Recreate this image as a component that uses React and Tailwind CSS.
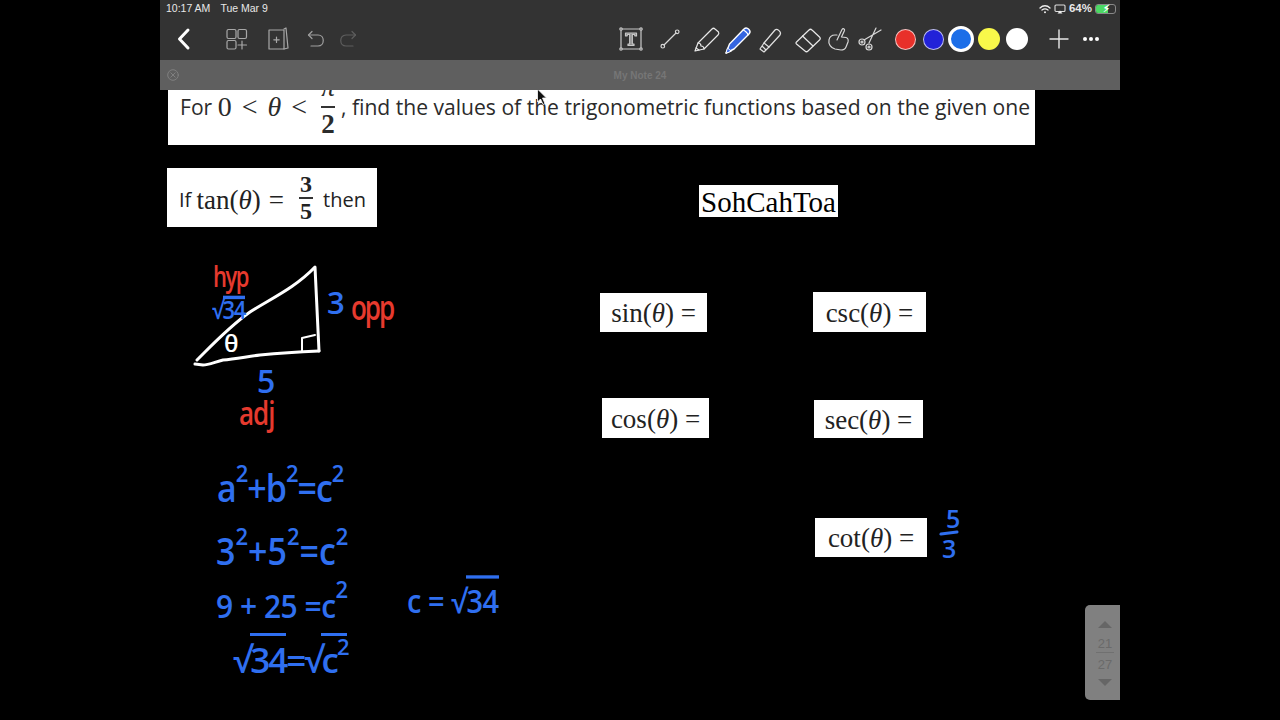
const serif = "font-['Liberation_Serif',serif]";

function Ic({ children, w = 28, h = 28, vb, className = "" }) {
  return (
    <svg width={w} height={h} viewBox={vb || `0 0 ${w} ${h}`} fill="none" strokeLinecap="round" strokeLinejoin="round" className={className}>
      {children}
    </svg>
  );
}

function Dot({ fill, ring = "border border-white/70", size = "w-[21px] h-[21px]" }) {
  return (
    <div className="w-[26px] h-[26px] flex items-center justify-center ml-[2px]">
      <div className={`rounded-full ${size} ${fill} ${ring}`} />
    </div>
  );
}

function Left() {
  return (
    <div className="flex items-center pl-3">
      <Ic w={24} h={28}>
        <path d="M16 5 L7.5 14 L16 23" stroke="#fff" strokeWidth="3" />
      </Ic>
      <Ic w={24} h={24} className="ml-[28px]">
        <g stroke="#a8a8a8" strokeWidth="1.2">
          <rect x="3" y="2.5" width="9" height="9" rx="1.5" />
          <rect x="14" y="2.5" width="8.5" height="9" rx="1.5" />
          <rect x="3" y="13.5" width="9" height="8.5" rx="1.5" />
          <path d="M18 14 V22 M14 18 H22.5" />
        </g>
      </Ic>
      <Ic w={24} h={26} className="ml-[18px]">
        <g stroke="#a8a8a8" strokeWidth="1.2">
          <rect x="3" y="4" width="15" height="19" />
          <path d="M18 3 L20 2 L22 22 L18 23" />
          <path d="M10.5 11 V16.5 M7.8 13.8 H13.2" />
        </g>
      </Ic>
      <Ic w={20} h={20} className="ml-[16px]">
        <g stroke="#a0a0a0" strokeWidth="1.2">
          <path d="M2.5 6 H12 C19 6 19 17 12 17 H5" />
          <path d="M6 2.5 L2.5 6 L6 9.5" />
        </g>
      </Ic>
      <Ic w={20} h={20} className="ml-[12px]">
        <g stroke="#5e5e5e" strokeWidth="1.2">
          <path d="M17.5 6 H8 C1 6 1 17 8 17 H15" />
          <path d="M14 2.5 L17.5 6 L14 9.5" />
        </g>
      </Ic>
    </div>
  );
}

function Right() {
  return (
    <div className="flex items-center pr-[15px]">
      <Ic>
        <g stroke="#c8c8c8" strokeWidth="1.2">
          <rect x="4" y="4" width="20" height="20" />
          <circle cx="4" cy="4" r="1.2" fill="#333" />
          <circle cx="24" cy="4" r="1.2" fill="#333" />
          <circle cx="4" cy="24" r="1.2" fill="#333" />
          <circle cx="24" cy="24" r="1.2" fill="#333" />
          <path d="M8.5 8 H19.5 V11 H18 L17.5 9.5 H15.3 V19 H17 V20.5 H11 V19 H12.7 V9.5 H10.5 L10 11 H8.5 Z" fill="#888" />
        </g>
      </Ic>
      <Ic className="ml-[11px]">
        <g stroke="#d8d8d8" strokeWidth="1.2">
          <path d="M8 20 L20 8" />
          <circle cx="6.8" cy="21.2" r="1.8" />
          <circle cx="21.2" cy="6.8" r="1.8" />
        </g>
      </Ic>
      <Ic className="ml-[9px]">
        <g stroke="#e8e8e8" strokeWidth="1.2">
          <path d="M2 26 L5 18 L19 4 C20 3 21 3 22 4 L25.5 7 C26 8 26 9 25 10 L11 24 Z" />
          <path d="M5 18 C7 18 8 19 8 21 C10 21 11 22 11 24 M3 23 L6 25" />
        </g>
      </Ic>
      <Ic w={30} h={30} className="ml-[2px] -mr-[1px]">
        <path d="M3 29 L6.5 20 L21 5 C24 2 29 7 26 10 L11 25 Z" fill="#3565e0" stroke="#fff" strokeWidth="1.4" />
        <path d="M20 6 C21 6 25 9 25 11" stroke="#fff" strokeWidth="1.2" />
        <path d="M3 29 L4.5 24 L8 27 Z" fill="#3565e0" stroke="#fff" strokeWidth="1" />
      </Ic>
      <Ic className="ml-[4px]">
        <g stroke="#e0e0e0" strokeWidth="1.2">
          <path d="M8 18 L19 5 C21 3 26 7 24 10 L13 22 Z" />
          <path d="M8 18 L6 21 L10 25 L13 22 M4 24 L8 27 L10 25 L6 21 Z" />
        </g>
      </Ic>
      <Ic className="ml-[10px]">
        <g stroke="#e8e8e8" strokeWidth="1.2">
          <path d="M2.5 17 L15 5 C16 4 17 4 18 5 L25.5 12 C26.5 13 26.5 14 25.5 15 L14 26 C13 27 12 27 11 26 L2.5 19 C2 18.5 2 17.5 2.5 17 Z" />
          <path d="M8.5 11 L19 21" />
        </g>
      </Ic>
      <Ic className="ml-[2px]">
        <g stroke="#d8d8d8" strokeWidth="1.2">
          <path d="M13 15 L18 4.5 C19 3 21 4 20.5 5.5 L17.5 12 L22 12.5 C24 13 24.5 15 24 17 L22 22 C21 24.5 19 25 17 25 L11 24 C7 23 4 19 5 15 C5.5 12 8 10 11 10 L13 10" />
        </g>
      </Ic>
      <Ic className="ml-[4px]">
        <g stroke="#d8d8d8" strokeWidth="1.2">
          <path d="M25 5 L8 15 M20 3 L13 18" />
          <circle cx="6" cy="17" r="3" />
          <circle cx="13" cy="22" r="3" />
          <circle cx="6" cy="17" r="1" />
          <circle cx="13" cy="22" r="1" />
        </g>
      </Ic>
      <div className="ml-[6px]">
        <Dot fill="bg-[#e8302a]" />
      </div>
      <Dot fill="bg-[#2222d8]" />
      <Dot fill="bg-[#1c6ee8]" ring="border-[3px] border-white" size="w-[26px] h-[26px]" />
      <Dot fill="bg-[#f8f84a]" ring="" size="w-[22px] h-[22px]" />
      <Dot fill="bg-white" ring="" size="w-[22px] h-[22px]" />
      <Ic className="ml-[15px]">
        <path d="M14 5 V23 M5 14 H23" stroke="#e8e8e8" strokeWidth="1.4" />
      </Ic>
      <div className="ml-[4px] w-7 flex justify-center gap-[2px]">
        <div className="w-[4px] h-[4px] rounded-full bg-white" />
        <div className="w-[4px] h-[4px] rounded-full bg-white" />
        <div className="w-[4px] h-[4px] rounded-full bg-white" />
      </div>
    </div>
  );
}

function Status() {
  return (
    <div className="h-[18px] flex items-center justify-between pl-[6px] pr-[4px] text-[10.5px] text-[#e8e8e8] font-['Liberation_Sans',sans-serif]">
      <div className="flex gap-[10px]">
        <span>10:17 AM</span>
        <span>Tue Mar 9</span>
      </div>
      <div className="flex items-center">
        <Ic w={12} h={10}>
          <path d="M1 4 C4 1 8 1 11 4 M3 6 C5 4.5 7 4.5 9 6" stroke="#eee" strokeWidth="1.3" />
          <circle cx="6" cy="8.2" r="1" fill="#eee" />
        </Ic>
        <Ic w={12} h={10} className="ml-[3px]">
          <rect x="1" y="1" width="10" height="6.5" rx="1" stroke="#ddd" strokeWidth="1.1" />
          <path d="M3.5 9.5 L6 6.5 L8.5 9.5 Z" fill="#eee" />
        </Ic>
        <span className="ml-[3px] text-[11.5px] font-bold">64%</span>
        <div className="ml-[3px] relative w-[21px] h-[10px] border border-[#888] rounded-[3px]">
          <div className="h-full w-[12px] bg-[#4cd964] rounded-l-[2px]" />
          <span className="absolute left-[7px] -top-[2px] text-[10px] leading-[12px] text-white font-bold">⚡︎</span>
        </div>
      </div>
    </div>
  );
}

function MathBox({ className, children }) {
  return (
    <div className={`absolute bg-white text-[#222] flex items-center justify-center whitespace-pre ${serif} ${className}`}>
      {children}
    </div>
  );
}

const T = () => <i>θ</i>;

function Ink({ className, children }) {
  return (
    <div className={`absolute whitespace-pre leading-none font-['Open_Sans',sans-serif] font-semibold origin-bottom-left ${className}`}>
      {children}
    </div>
  );
}

function Sup({ children }) {
  return <span className="text-[22px] relative -top-[18px]">{children}</span>;
}

function Root({ children }) {
  return <span className="border-t-[3px] border-[#2f6ff0]">{children}</span>;
}

function Canvas() {
  return (
    <div className="relative flex-1 bg-black overflow-hidden">
      {/* instruction strip */}
      <div className="absolute left-[8px] top-0 w-[867px] h-[55px] bg-white overflow-hidden text-[#2b2b2b] pl-[12px]">
        <div className="h-[34px] flex items-center whitespace-pre text-[21.1px] font-['Open_Sans',sans-serif]">
          <span>For </span>
          <span className={`${serif} text-[28px] [word-spacing:3px]`}>0 &lt; <T /> &lt;</span>
          <span className={`${serif} ml-[14px] text-[27px] flex flex-col items-center font-bold`}>
            <span className="h-[24px] leading-[10px] font-normal italic">π</span>
            <span className="w-[14px] h-[2px] bg-[#333]" />
            <span className="h-[24px] leading-[32px]">2</span>
          </span>
          <span className="ml-[6px]">, find the values of the trigonometric functions based on the given one</span>
        </div>
      </div>

      <MathBox className="left-[7px] top-[78px] w-[210px] h-[59px] text-[27px] justify-start pl-[12px]">
        <span className="font-['Open_Sans',sans-serif] text-[20px] mt-[5px]">If </span>
        <span className="mt-[5px]">tan(<T />)</span>
        <span className="ml-[8px] mt-[5px]">=</span>
        <span className="ml-[15px] text-[24px] flex flex-col items-center font-bold">
          <span className="h-[25px] leading-[25px]">3</span>
          <span className="w-[14px] h-[2px] bg-[#333]" />
          <span className="h-[25px] leading-[25px]">5</span>
        </span>
        <span className="ml-[10px] mt-[5px] font-['Open_Sans',sans-serif] text-[20px]">then</span>
      </MathBox>

      <MathBox className="left-[539px] top-[95px] w-[139px] h-[32px] text-[29px] text-black pt-[3px]">SohCahToa</MathBox>
      <MathBox className="left-[440px] top-[203px] w-[107px] h-[39px] text-[27px] pt-[2px]">sin(<T />) =</MathBox>
      <MathBox className="left-[653px] top-[202px] w-[113px] h-[40px] text-[27px] pt-[2px]">csc(<T />) =</MathBox>
      <MathBox className="left-[442px] top-[308px] w-[107px] h-[40px] text-[27px] pt-[2px]">cos(<T />) =</MathBox>
      <MathBox className="left-[654px] top-[310px] w-[109px] h-[38px] text-[27px] pt-[2px]">sec(<T />) =</MathBox>
      <MathBox className="left-[655px] top-[428px] w-[112px] h-[39px] text-[27px] pt-[2px]">cot(<T />) =</MathBox>

      {/* triangle */}
      <svg width="160" height="120" viewBox="0 0 160 120" fill="none" className="absolute left-[30px] top-[170px]" strokeLinecap="round" strokeLinejoin="round">
        <g stroke="#fff" strokeWidth="3">
          <path d="M7 100 C25 82 40 66 60 52 C80 39 105 28 125 7 L129 91" />
          <path d="M129 91 C105 92 90 93 70 95 C55 97 44 99 33 100 C25 102 18 105 13 105 L5 104" />
          <path d="M112 92 L112 78 L125 75" strokeWidth="2" />
        </g>
      </svg>
      <Ink className="left-[64px] top-[241px] text-[24px] text-white font-bold">θ</Ink>

      {/* red ink */}
      <Ink className="left-[53px] top-[178px] text-[22px] text-[#e63a2e] tracking-[-1.5px] scale-y-[1.3]">hyp</Ink>
      <Ink className="left-[191px] top-[208px] text-[26px] text-[#e63a2e] tracking-[-2px] scale-y-[1.35]">opp</Ink>
      <Ink className="left-[79px] top-[313px] text-[26px] text-[#e63a2e] tracking-[-1px] scale-y-[1.25]">adj</Ink>

      {/* blue ink */}
      <div className="text-[#2f6ff0]">
        <Ink className="left-[52px] top-[209px] text-[22px] tracking-[-1.5px] scale-y-[1.15]">√<span className="inline-block leading-[16px] border-t-[3px] border-[#2f6ff0]">34</span></Ink>
        <Ink className="left-[167px] top-[197px] text-[31px]">3</Ink>
        <Ink className="left-[97px] top-[275px] text-[32px]">5</Ink>
        <Ink className="left-[57px] top-[382px] text-[34px] tracking-[-1px] scale-y-[1.1]">a<Sup>2</Sup>+b<Sup>2</Sup>=c<Sup>2</Sup></Ink>
        <Ink className="left-[56px] top-[445px] text-[34px] scale-y-[1.1]">3<Sup>2</Sup>+5<Sup>2</Sup>=c<Sup>2</Sup></Ink>
        <Ink className="left-[56px] top-[502px] text-[30px] tracking-[-0.5px] scale-y-[1.1]">9 + 25 =c<Sup>2</Sup></Ink>
        <Ink className="left-[73px] top-[552px] text-[35px] tracking-[-2px]">√<Root>34</Root>=√<Root>c<Sup>2</Sup></Root></Ink>
        <Ink className="left-[247px] top-[497px] text-[29px] tracking-[-0.5px] scale-y-[1.1]">c = √<Root>34</Root></Ink>
        <Ink className="left-[778px] top-[416px] flex flex-col items-center">
          <span className="text-[25px] leading-[24px] ml-[8px]">5</span>
          <svg width="20" height="6" viewBox="0 0 20 6" fill="none" className="block">
            <path d="M2 4 L18 2" stroke="#2f6ff0" strokeWidth="3" strokeLinecap="round" />
          </svg>
          <span className="text-[25px] leading-[24px]">3</span>
        </Ink>
      </div>

      {/* page scroller */}
      <div className="absolute right-0 top-[515px] w-[35px] h-[95px] bg-[#808080] rounded-l-[5px] flex flex-col items-center pt-[16px] pl-[5px] text-[#6a6a6a] font-['Liberation_Sans',sans-serif] text-[13px]">
        <div className="w-0 h-0 border-x-[7px] border-x-transparent border-b-[7px] border-b-[#666]" />
        <span className="mt-[8px] leading-[15px]">21</span>
        <div className="w-[18px] h-px bg-[#707070] my-[1px]" />
        <span className="mt-[3px] leading-[15px]">27</span>
        <div className="mt-[7px] w-0 h-0 border-x-[7px] border-x-transparent border-t-[7px] border-t-[#666]" />
      </div>

      {/* pointer */}
      <svg width="12" height="18" viewBox="0 0 12 18" className="absolute left-[376px] top-[-2px]">
        <path d="M1.5 1 L1.5 14 L4.5 11 L7 16.5 L9 15.5 L6.5 10 L10.5 10 Z" fill="#111" stroke="#fff" strokeWidth="0.8" />
      </svg>
    </div>
  );
}

export default function App() {
  return (
    <div className="w-[1280px] h-[720px] bg-black flex justify-center overflow-hidden">
      <div className="w-[960px] h-full flex flex-col">
        <div className="h-[60px] bg-[#333333] shrink-0">
          <Status />
          <div className="h-[42px] flex items-center justify-between">
            <Left />
            <Right />
          </div>
        </div>
        <div className="h-[30px] shrink-0 bg-[#5f5f5f] relative flex items-center justify-center font-['Liberation_Sans',sans-serif] text-[10px] font-bold text-[#767676]">
          <Ic w={14} h={14} className="absolute left-[6px] top-[8px]">
            <circle cx="7" cy="7" r="5.3" stroke="#808080" strokeWidth="1" />
            <path d="M4.8 4.8 L9.2 9.2 M9.2 4.8 L4.8 9.2" stroke="#808080" strokeWidth="1" />
          </Ic>
          My Note 24
        </div>
        <Canvas />
      </div>
    </div>
  );
}
